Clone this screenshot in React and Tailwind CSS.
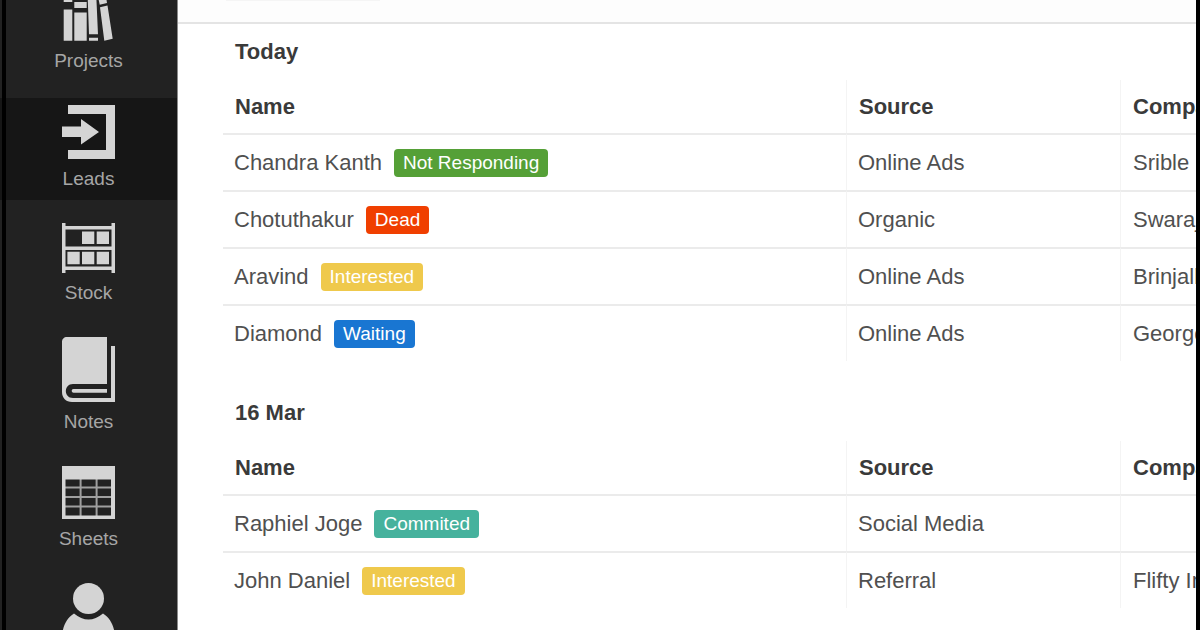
import React from "react";
import clsx from "clsx";

const BADGE_STYLES = {
  "Not Responding": "bg-[#55a037]",
  Dead: "bg-[#f03f00]",
  Interested: "bg-[#efc94c]",
  Waiting: "bg-[#1976d2]",
  Commited: "bg-[#46b29d]"
};

const GROUPS = [
  {
    title: "Today",
    leads: [
      { name: "Chandra Kanth", status: "Not Responding", source: "Online Ads", company: "Srible" },
      { name: "Chotuthakur", status: "Dead", source: "Organic", company: "Swaraj" },
      { name: "Aravind", status: "Interested", source: "Online Ads", company: "Brinjall" },
      { name: "Diamond", status: "Waiting", source: "Online Ads", company: "George" }
    ]
  },
  {
    title: "16 Mar",
    leads: [
      { name: "Raphiel Joge", status: "Commited", source: "Social Media", company: "" },
      { name: "John Daniel", status: "Interested", source: "Referral", company: "Flifty Inc" }
    ]
  }
];

function ProjectsIcon() {
  return (
    <svg width="53" height="53" viewBox="0 0 53 53" fill="currentColor" aria-hidden="true">
      <path d="M1.7 4h8.6v10H1.7zM1.7 21.5h8.6v31.2H1.7z" />
      <path d="M12.3 2h12.4v10H12.3zM12.3 14h12.4v6H12.3zM12.3 24.5h12.4v28.2H12.3z" />
      <path d="M25.5 4h8.6L36 46.3h-9zM27 49.7h9v3h-9z" />
      <path d="M35 4l8-2 2 13-7.3 1.7zM38 19.3l7.5-1.7 5.2 33.2-8.4 2z" />
    </svg>
  );
}

function LeadsIcon() {
  return (
    <svg width="53" height="54" viewBox="0 0 53 54" fill="currentColor" aria-hidden="true">
      <path d="M6 0h47v54H6v-9h38V9H6z" />
      <path d="M0 21.5h19V14l18 13-18 12.5V32H0z" />
    </svg>
  );
}

function StockIcon() {
  return (
    <svg width="53" height="50" viewBox="0 0 53 50" fill="currentColor" aria-hidden="true">
      <path d="M0 0h3.5v50H0zM49.5 0H53v50h-3.5z" />
      <path d="M3 3h47v3.5H3zM3 23.5h47V27H3zM3 43.5h47V47H3z" />
      <path d="M20 8.5h12.3V21H20zM34.7 8.5H47V21H34.7z" />
      <path d="M5.4 28.8h12.3v12.4H5.4zM20 28.8h12.3v12.4H20zM34.7 28.8H47v12.4H34.7z" />
    </svg>
  );
}

function NotesIcon() {
  return (
    <svg width="53" height="65" viewBox="0 0 53 65" fill="currentColor" aria-hidden="true">
      <path d="M5 0h40v47H11C1.5 47 1.5 61 11 61h38V9h4v56H10C4 65 0 61 0 55V5c0-3 2-5 5-5z" />
      <path d="M11.5 52H45v3.7H11.5c-2.4 0-2.4-3.7 0-3.7z" />
    </svg>
  );
}

function SheetsIcon() {
  return (
    <svg width="53" height="53" viewBox="0 0 53 53" aria-hidden="true">
      <path fill="currentColor" d="M0 0h53v53H0z" />
      <path fill="#222222" d="M3.5 13.5h45.5v36H3.5z" />
      <path
        stroke="currentColor"
        strokeWidth="2"
        opacity="0.7"
        d="M18.6 13v37M34.6 13v37M3 21.5h46M3 31h46M3 40.5h46"
      />
    </svg>
  );
}

function UserIcon() {
  return (
    <svg width="53" height="53" viewBox="0 0 53 53" fill="currentColor" aria-hidden="true">
      <circle cx="26.5" cy="15.5" r="15.5" />
      <path d="M12 30.5Q26.5 42.5 41 30.5C48 35 52 42 53 53H0C1 42 5 35 12 30.5z" />
    </svg>
  );
}

const NAV_ITEMS = [
  { label: "Projects", Icon: ProjectsIcon },
  { label: "Leads", Icon: LeadsIcon, active: true },
  { label: "Stock", Icon: StockIcon },
  { label: "Notes", Icon: NotesIcon },
  { label: "Sheets", Icon: SheetsIcon }
];

function Sidebar() {
  return (
    <aside className="relative w-[178px] shrink-0 overflow-hidden border-r border-[#8a8a8a] bg-[#222222]">
      {/* list is scrolled so that the first icon runs under the top edge */}
      <nav className="-mt-[19px] flex flex-col gap-4">
        {NAV_ITEMS.map(({ label, Icon, active }) => (
          <a
            key={label}
            href="#"
            aria-current={active ? "page" : undefined}
            className={clsx(
              "flex flex-col items-center gap-2 pt-[7px] pb-[9px] text-[#d4d4d4]",
              active && "bg-[#161616]"
            )}
          >
            <Icon />
            <span className="text-[19px] leading-6 text-[#a6a6a6]">{label}</span>
          </a>
        ))}
        <a href="#" aria-label="Account" className="flex flex-col items-center pt-[7px] text-[#d4d4d4]">
          <UserIcon />
        </a>
      </nav>
      <span className="absolute inset-y-0 left-0.5 w-1 bg-black" />
    </aside>
  );
}

function LeadGroup({ title, leads }) {
  return (
    <section className="mb-6">
      <h2 className="flex h-14 items-center px-3 font-bold text-[#3a3a3a]">{title}</h2>
      <table className="w-full table-fixed border-separate border-spacing-0 text-left">
        <thead>
          <tr className="text-[#3a3a3a]">
            <th className="h-[53px] px-3 py-0 font-bold">Name</th>
            <th className="w-[274px] border-l border-[#f4f4f4] px-3 py-0 font-bold">Source</th>
            <th className="w-[76px] overflow-hidden border-l border-[#f4f4f4] py-0 pl-3 font-bold">
              Company
            </th>
          </tr>
        </thead>
        <tbody>
          {leads.map((lead) => (
            <tr key={lead.name} className="whitespace-nowrap">
              <td className="h-[57px] border-t-2 border-[#ebebeb] px-[11px] py-0">
                <div className="flex items-center gap-3">
                  {lead.name}
                  <span
                    className={clsx(
                      "h-7 rounded px-[9px] text-[19px] leading-7 text-white",
                      BADGE_STYLES[lead.status]
                    )}
                  >
                    {lead.status}
                  </span>
                </div>
              </td>
              <td className="border-t-2 border-l border-t-[#ebebeb] border-l-[#f4f4f4] px-[11px] py-0">
                {lead.source}
              </td>
              <td className="overflow-hidden border-t-2 border-l border-t-[#ebebeb] border-l-[#f4f4f4] py-0 pl-3">
                {lead.company}
              </td>
            </tr>
          ))}
        </tbody>
      </table>
    </section>
  );
}

export default function App() {
  return (
    <div className="flex h-screen overflow-hidden bg-white font-['Liberation_Sans',Arial,sans-serif] text-[22px] leading-7 text-[#505050]">
      <Sidebar />
      <main className="min-w-0 flex-1 overflow-hidden border-r-4 border-black">
        <header className="h-6 border-b-2 border-[#e4e4e4] bg-[#fdfdfd] pl-12">
          <div className="h-px w-[154px] bg-[#f5f5f5]" />
        </header>
        <div className="pl-[45px]">
          {GROUPS.map((group) => (
            <LeadGroup key={group.title} {...group} />
          ))}
        </div>
      </main>
    </div>
  );
}
